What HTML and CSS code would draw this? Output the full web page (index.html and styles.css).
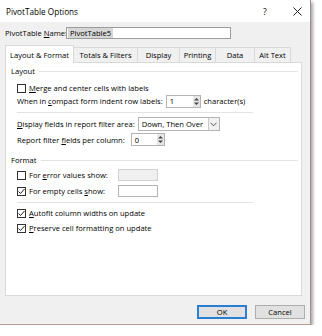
FILE: index.html
```html
<!DOCTYPE html>
<html>
<head>
<meta charset="utf-8">
<link rel="stylesheet" href="styles.css">
</head>
<body>
<div class="dialog">
  <div class="titlebar">
    <span class="title">PivotTable Options</span>
    <span class="help">?</span>
    <span class="close"><svg width="9" height="9" viewBox="0 0 9 9"><path d="M0.5 0.5 L8.5 8.5 M8.5 0.5 L0.5 8.5" stroke="#222" stroke-width="1"/></svg></span>
  </div>
  <div class="namerow">
    <span class="label">PivotTable <u>N</u>ame:</span>
    <div class="nameinput"><span class="sel">PivotTable5</span></div>
  </div>
  <div class="tabs">
    <div class="tab active">Layout &amp; Format</div>
    <div class="tab">Totals &amp; Filters</div>
    <div class="tab">Display</div>
    <div class="tab">Printing</div>
    <div class="tab">Data</div>
    <div class="tab">Alt Text</div>
  </div>
  <div class="panel">
    <div class="group"><span>Layout</span><span class="gline"></span></div>
    <div class="row r-merge"><span class="cb"></span><span><u>M</u>erge and center cells with labels</span></div>
    <div class="row r-indent"><span>When in <u>c</u>ompact form indent row labels:</span>
      <div class="spin w-indent"><span class="val">1</span><span class="arrows"><svg width="5" height="9" viewBox="0 0 5 9"><path d="M0 3.5 L2.5 1 L5 3.5Z M0 5.5 L2.5 8 L5 5.5Z" fill="#444"/></svg></span></div>
      <span>character(s)</span></div>
    <div class="sep"></div>
    <div class="row r-display"><span><u>D</u>isplay fields in report filter area:</span>
      <div class="combo"><span class="val">Down, Then Over</span><span class="drop"><svg width="7" height="5" viewBox="0 0 7 5"><path d="M0.5 0.8 L3.5 3.8 L6.5 0.8" fill="none" stroke="#555" stroke-width="1"/></svg></span></div></div>
    <div class="row r-report"><span>Report filter <u>f</u>ields per column:</span>
      <div class="spin w-report"><span class="val">0</span><span class="arrows"><svg width="5" height="9" viewBox="0 0 5 9"><path d="M0 3.5 L2.5 1 L5 3.5Z M0 5.5 L2.5 8 L5 5.5Z" fill="#444"/></svg></span></div></div>
    <div class="group g-format"><span>Format</span><span class="gline"></span></div>
    <div class="row r-error"><span class="cb"></span><span class="fl">For <u>e</u>rror values show:</span><div class="box disabled"></div></div>
    <div class="row r-empty"><span class="cb checked"><svg width="9" height="9" viewBox="0 0 9 9"><path d="M1.5 4.5 L3.5 6.5 L7.5 2" fill="none" stroke="#222" stroke-width="1"/></svg></span><span class="fl">For empty cells <u>s</u>how:</span><div class="box"></div></div>
    <div class="sep sep2"></div>
    <div class="row r-autofit"><span class="cb checked"><svg width="9" height="9" viewBox="0 0 9 9"><path d="M1.5 4.5 L3.5 6.5 L7.5 2" fill="none" stroke="#222" stroke-width="1"/></svg></span><span><u>A</u>utofit column widths on update</span></div>
    <div class="row r-preserve"><span class="cb checked"><svg width="9" height="9" viewBox="0 0 9 9"><path d="M1.5 4.5 L3.5 6.5 L7.5 2" fill="none" stroke="#222" stroke-width="1"/></svg></span><span><u>P</u>reserve cell formatting on update</span></div>
  </div>
  <div class="buttons">
    <div class="btn ok">OK</div>
    <div class="btn">Cancel</div>
  </div>
</div>
</body>
</html>
```
FILE: styles.css
```css
html, body {
  margin: 0;
  padding: 0;
  background: #ffffff;
}
body {
  font-family: "Open Sans", "Noto Sans", sans-serif;
  font-size: 7.6px;
  color: #000;
  white-space: nowrap;
}
u { text-decoration: underline; text-underline-offset: 1px; }
.dialog {
  width: 310px;
  height: 324px;
  background: #f0f0f0;
  border-right: 1px solid #9a8f8c;
  border-bottom: 1px solid #b89a90;
  box-shadow: 2px 2px 3px rgba(0,0,0,0.35);
  display: flex;
  flex-direction: column;
}
.titlebar {
  height: 22px;
  flex: none;
  background: #ffffff;
  display: flex;
  align-items: center;
  padding-left: 6px;
}
.title { flex: 1; font-size: 8.2px; }
.help { width: 30px; font-size: 8.5px; }
.close { width: 17px; display: flex; }
.namerow {
  height: 13px;
  flex: none;
  display: flex;
  align-items: center;
  padding-left: 5px;
  margin-top: 4px;
}
.namerow .label { width: 61px; flex: none; }
.nameinput {
  width: 165px;
  height: 12px;
  flex: none;
  box-sizing: border-box;
  border: 1px solid #9c9c9c;
  background: #fff;
  display: flex;
  align-items: center;
  padding-left: 1px;
}
.sel { background: #d6d6d6; padding: 0 2px; line-height: 10px; }
.tabs {
  display: flex;
  flex: none;
  margin-top: 6px;
  padding-left: 5px;
  height: 17px;
  align-items: flex-end;
}
.tab {
  height: 15px;
  flex: none;
  box-sizing: border-box;
  border: 1px solid #d9d9d9;
  border-bottom: none;
  border-left: none;
  display: flex;
  align-items: center;
  justify-content: center;
  background: #f0f0f0;
}
.tab.active {
  height: 18px;
  background: #fff;
  border-left: 1px solid #d9d9d9;
  margin-bottom: -1px;
  position: relative;
  z-index: 1;
  width: 69px;
}
.tab:nth-child(2) { width: 64px; }
.tab:nth-child(3) { width: 42px; }
.tab:nth-child(4) { width: 36px; }
.tab:nth-child(5) { width: 39px; }
.tab:nth-child(6) { width: 36px; }
.panel {
  flex: none;
  margin-left: 5px;
  width: 297px;
  height: 234px;
  background: #fff;
  border: 1px solid #d9d9d9;
  box-sizing: border-box;
  padding-top: 3px;
  padding-left: 5px;
  display: flex;
  flex-direction: column;
}
.group {
  height: 10px;
  flex: none;
  display: flex;
  align-items: center;
  gap: 4px;
}
.gline { flex: 1; height: 1px; background: #e3e3e3; margin-right: 3px; }
.row {
  display: flex;
  flex: none;
  align-items: center;
  padding-left: 6px;
  gap: 3px;
}
.cb {
  width: 9px;
  height: 9px;
  box-sizing: border-box;
  border: 1px solid #333;
  background: #fff;
  display: flex;
  align-items: center;
  justify-content: center;
  flex: none;
}
.cb svg { flex: none; }
.r-merge { height: 10px; margin-top: 7px; }
.r-indent { height: 14px; margin-top: 1px; }
.spin {
  height: 13px;
  box-sizing: border-box;
  border: 1px solid #b4b4b4;
  background: #fff;
  display: flex;
  align-items: center;
  justify-content: space-between;
  padding-left: 3px;
}
.w-indent { width: 35px; }
.w-report { width: 34px; margin-left: 3px; }
.arrows {
  width: 7px;
  height: 11px;
  background: #e6e6e6;
  display: flex;
  align-items: center;
  justify-content: center;
}
.sep { height: 1px; flex: none; background: #e3e3e3; width: 236px; margin-left: 6px; margin-top: 4px; }
.r-display { height: 14px; margin-top: 4px; }
.combo {
  width: 82px;
  height: 14px;
  box-sizing: border-box;
  border: 1px solid #b4b4b4;
  background: #fff;
  display: flex;
  align-items: center;
  justify-content: space-between;
  padding-left: 3px;
}
.drop {
  width: 10px;
  height: 12px;
  border-left: 1px solid #c8c8c8;
  background: #f0f0f0;
  display: flex;
  align-items: center;
  justify-content: center;
}
.r-report { height: 13px; margin-top: 2px; }
.g-format { margin-top: 9px; }
.r-error { height: 12px; margin-top: 4px; }
.r-empty { height: 12px; margin-top: 4px; }
.fl { width: 86px; }
.box {
  width: 40px;
  height: 12px;
  box-sizing: border-box;
  border: 1px solid #b4b4b4;
  background: #fff;
}
.box.disabled { background: #f0f0f0; border-color: #d0d0d0; }
.sep2 { margin-top: 5px; }
.r-autofit { height: 10px; margin-top: 5px; }
.r-preserve { height: 10px; margin-top: 5px; }
.buttons {
  display: flex;
  flex: none;
  justify-content: flex-end;
  gap: 8px;
  padding-right: 5px;
  margin-top: 9px;
}
.btn {
  width: 50px;
  height: 14px;
  box-sizing: border-box;
  border: 1px solid #adadad;
  background: #e1e1e1;
  display: flex;
  align-items: center;
  justify-content: center;
}
.btn.ok { border: 2px solid #2b7fd0; }
```
